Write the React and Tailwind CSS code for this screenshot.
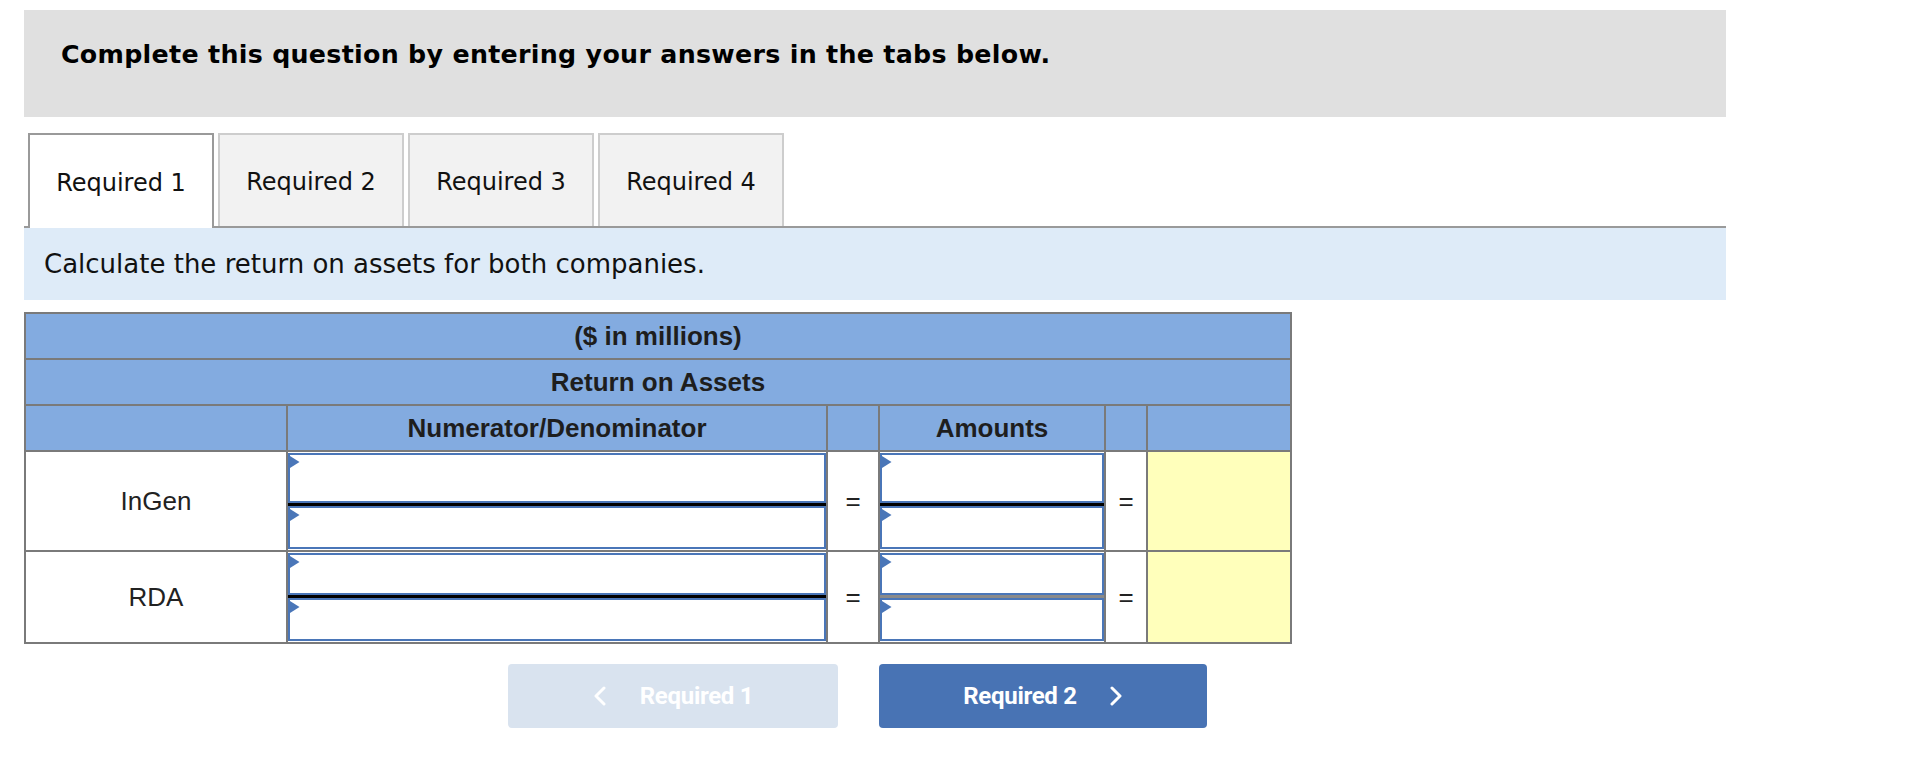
import React from "react";

const verdana = { fontFamily: '"DejaVu Sans", Verdana, sans-serif' };
const arial = { fontFamily: '"Liberation Sans", Arial, sans-serif' };
const roboto = { fontFamily: 'Roboto, "Liberation Sans", sans-serif' };

function Tab({ label, active }) {
  if (active) {
    return (
      <div className="w-[186px] h-[95px] -mb-[2px] pt-[3px] bg-white border-2 border-b-0 border-[#9a9a9a] flex items-center justify-center text-[24px] text-[#111]">
        {label}
      </div>
    );
  }
  return (
    <div className="w-[186px] h-[93px] pt-[3px] bg-[#f2f2f2] border-2 border-b-0 border-[#cdcdcd] flex items-center justify-center text-[24px] text-[#111]">
      {label}
    </div>
  );
}

function Marker() {
  return (
    <svg className="absolute left-0 top-[1px]" width="10" height="12" viewBox="0 0 10 12">
      <polygon points="0,0 9.5,6 0,12" fill="#4a76b8" />
    </svg>
  );
}

function Field({ className }) {
  return (
    <div className={"relative w-full border-2 border-[#4a76b8] bg-white " + className}>
      <Marker />
    </div>
  );
}

function Fraction({ top, bottom, line }) {
  return (
    <div className="bg-white flex flex-col py-[1px]">
      <Field className={top} />
      <div className={line} />
      <Field className={bottom} />
    </div>
  );
}

function Eq() {
  return (
    <div className="bg-white flex items-center justify-center text-[26px] text-[#222]">=</div>
  );
}

function Head({ children }) {
  return (
    <div className="bg-[#83abe0] flex items-center justify-center font-bold text-[26px] text-[#1e1e1e]">
      {children}
    </div>
  );
}

export default function App() {
  return (
    <div className="w-[1924px] min-h-[772px] bg-white">
      <div className="ml-[24px] w-[1702px] pt-[10px]" style={verdana}>
        <div className="h-[107px] bg-[#e0e0e0] pl-[37px] pt-[31px]">
          <p className="font-bold text-[25.3px] leading-[28px] tracking-[0.3px] text-black">
            Complete this question by entering your answers in the tabs below.
          </p>
        </div>

        <div className="mt-[16px] flex gap-[4px] pl-[4px] border-b-2 border-[#9a9a9a]">
          <Tab label="Required 1" active />
          <Tab label="Required 2" />
          <Tab label="Required 3" />
          <Tab label="Required 4" />
        </div>

        <div className="h-[72px] bg-[#deebf8] flex items-center pl-[20px] pt-[1px] text-[26px] text-[#111]">
          Calculate the return on assets for both companies.
        </div>

        <div
          className="mt-[12px] w-[1268px] grid gap-[2px] p-[2px] bg-[#7a7a7a] grid-cols-[260px_538px_50px_224px_40px_142px] grid-rows-[44px_44px_44px_98px_90px]"
          style={arial}
        >
          <div className="col-span-6 bg-[#83abe0] flex items-center justify-center font-bold text-[26px] text-[#1e1e1e]">
            ($ in millions)
          </div>
          <div className="col-span-6 bg-[#83abe0] flex items-center justify-center font-bold text-[26px] text-[#1e1e1e]">
            Return on Assets
          </div>
          <Head />
          <Head>Numerator/Denominator</Head>
          <Head />
          <Head>Amounts</Head>
          <Head />
          <Head />

          <div className="bg-white flex items-center justify-center text-[26px] text-[#222]">InGen</div>
          <Fraction top="h-[50px]" bottom="h-[43px]" line="h-[3px] bg-black" />
          <Eq />
          <Fraction top="h-[50px]" bottom="h-[43px]" line="h-[3px] bg-black" />
          <Eq />
          <div className="bg-[#ffffbb]" />

          <div className="bg-white flex items-center justify-center text-[26px] text-[#222]">RDA</div>
          <Fraction top="h-[42px]" bottom="h-[43px]" line="h-[3px] bg-black" />
          <Eq />
          <Fraction top="h-[42px]" bottom="h-[43px]" line="h-[3px] bg-[#8a8a8a]" />
          <Eq />
          <div className="bg-[#ffffbb]" />
        </div>

        <div className="mt-[20px] pl-[484px] flex gap-[41px]" style={roboto}>
          <div className="w-[330px] h-[64px] rounded-[4px] bg-[#d9e3ef] flex items-center justify-center gap-[33px] text-white font-bold text-[24px] tracking-[-0.3px]">
            <svg width="14" height="20" viewBox="0 0 14 20">
              <polyline points="11,2 3,10 11,18" fill="none" stroke="white" strokeWidth="3" strokeLinecap="round" strokeLinejoin="round" />
            </svg>
            <span>Required 1</span>
          </div>
          <div className="w-[328px] h-[64px] rounded-[4px] bg-[#4873b4] flex items-center justify-center gap-[32px] text-white font-bold text-[24px] tracking-[-0.3px]">
            <span>Required 2</span>
            <svg width="14" height="20" viewBox="0 0 14 20">
              <polyline points="3,2 11,10 3,18" fill="none" stroke="white" strokeWidth="3" strokeLinecap="round" strokeLinejoin="round" />
            </svg>
          </div>
        </div>
      </div>
    </div>
  );
}
